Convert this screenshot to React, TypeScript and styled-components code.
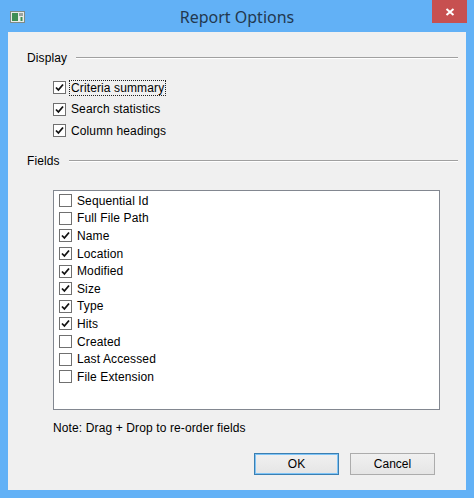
import React from "react";
import styled, { createGlobalStyle } from "styled-components";

const GlobalStyle = createGlobalStyle`
  html, body {
    margin: 0;
    padding: 0;
    background: #62b1f6;
  }
  * { box-sizing: border-box; }
`;

const Frame = styled.div`
  width: 474px;
  height: 498px;
  background: #62b1f6;
  display: flex;
  flex-direction: column;
  padding: 0 8px 8px 8px;
  font-family: "Liberation Sans", Arial, sans-serif;
  font-size: 12px;
  letter-spacing: 0.12px;
  color: #000;
`;

const TitleBar = styled.div`
  height: 32px;
  display: flex;
  align-items: center;
  position: relative;
  margin: 0 -8px;
`;

const AppIcon = styled.svg`
  position: absolute;
  left: 10px;
  top: 11px;
`;

const Title = styled.div`
  flex: 1;
  text-align: center;
  font-family: "Noto Sans", "Open Sans", sans-serif;
  font-size: 16px;
  letter-spacing: 0;
  color: #22384f;
  padding-top: 1px;
`;

const CloseButton = styled.div`
  position: absolute;
  right: 7px;
  top: 0;
  width: 35px;
  height: 23px;
  background: #c75050;
  display: flex;
  align-items: center;
  justify-content: center;
`;

const Client = styled.div`
  flex: 1;
  background: #f0f0f0;
  display: flex;
  flex-direction: column;
  padding: 18px 8px 15px 0;
`;

const GroupHeader = styled.div`
  height: 16px;
  display: flex;
  align-items: center;
  gap: 9px;
  padding-left: 19px;
`;

const GroupLine = styled.div`
  flex: 1;
  height: 2px;
  border-top: 1px solid #a0a0a0;
  border-bottom: 1px solid #ffffff;
`;

const OptionList = styled.div`
  display: flex;
  flex-direction: column;
  margin: 11px 0 11.5px 45px;
`;

const OptionRow = styled.label`
  height: 21.5px;
  display: flex;
  align-items: center;
  gap: 3px;
`;

const Label = styled.span<{ $focused?: boolean }>`
  padding: 0 1px;
  line-height: 14px;
  border: 1px dotted ${(p) => (p.$focused ? "#202020" : "transparent")};
`;

const Box = styled.span`
  width: 13px;
  height: 13px;
  border: 1px solid #707070;
  background: #ffffff;
  display: inline-flex;
  align-items: center;
  justify-content: center;
  flex: none;
`;

const ListBox = styled.div`
  margin: 21px 0 0 45px;
  width: 387px;
  height: 220px;
  background: #ffffff;
  border: 1px solid #828790;
  padding: 1px 5px;
  display: flex;
  flex-direction: column;
`;

const FieldRow = styled.div`
  height: 17.6px;
  display: flex;
  align-items: center;
  gap: 5px;
`;

const Note = styled.div`
  margin: 10px 0 0 45px;
  height: 16px;
  line-height: 16px;
`;

const ButtonRow = styled.div`
  margin-top: 17px;
  display: flex;
  justify-content: flex-end;
  gap: 11px;
  padding-right: 23px;
`;

const Button = styled.button<{ $default?: boolean }>`
  width: 85px;
  height: 22px;
  font-family: "Liberation Sans", Arial, sans-serif;
  font-size: 12px;
  color: #000;
  background: linear-gradient(#f0f0f0, #e5e5e5);
  border: 1px solid ${(p) => (p.$default ? "#3c7fb1" : "#acacac")};
  box-shadow: ${(p) => (p.$default ? "inset 0 0 0 1px #7ec4f7" : "none")};
  padding: 0;
`;

const Check = ({ on }: { on: boolean }) => (
  <Box>
    {on && (
      <svg width="9" height="9" viewBox="0 0 9 9">
        <path d="M1 4.5 L3.4 7 L8 1.5" fill="none" stroke="#111" strokeWidth="1.8" />
      </svg>
    )}
  </Box>
);

const display = [
  { label: "Criteria summary", on: true, focused: true },
  { label: "Search statistics", on: true },
  { label: "Column headings", on: true },
];

const fields = [
  { label: "Sequential Id", on: false },
  { label: "Full File Path", on: false },
  { label: "Name", on: true },
  { label: "Location", on: true },
  { label: "Modified", on: true },
  { label: "Size", on: true },
  { label: "Type", on: true },
  { label: "Hits", on: true },
  { label: "Created", on: false },
  { label: "Last Accessed", on: false },
  { label: "File Extension", on: false },
];

const App = () => {
  return (
    <>
      <GlobalStyle />
      <Frame>
        <TitleBar>
          <AppIcon width="15" height="12" viewBox="0 0 15 12">
            <rect x="0.5" y="0.5" width="14" height="11" fill="#e8ece8" stroke="#7f8a84" />
            <rect x="2" y="2" width="6" height="8" fill="#3f8f55" />
            <rect x="9" y="2" width="4" height="3" fill="#9aa4a0" />
            <rect x="10.5" y="6" width="2" height="4" fill="#3f8f55" />
          </AppIcon>
          <Title>Report Options</Title>
          <CloseButton>
            <svg width="10" height="8" viewBox="0 0 10 8">
              <path d="M1.5 1 L8.5 7 M8.5 1 L1.5 7" stroke="#fff" strokeWidth="2" />
            </svg>
          </CloseButton>
        </TitleBar>
        <Client>
          <GroupHeader>
            Display
            <GroupLine />
          </GroupHeader>
          <OptionList>
            {display.map((d) => (
              <OptionRow key={d.label}>
                <Check on={d.on} />
                <Label $focused={d.focused}>{d.label}</Label>
              </OptionRow>
            ))}
          </OptionList>
          <GroupHeader>
            Fields
            <GroupLine />
          </GroupHeader>
          <ListBox>
            {fields.map((f) => (
              <FieldRow key={f.label}>
                <Check on={f.on} />
                {f.label}
              </FieldRow>
            ))}
          </ListBox>
          <Note>Note: Drag + Drop to re-order fields</Note>
          <ButtonRow>
            <Button $default>OK</Button>
            <Button>Cancel</Button>
          </ButtonRow>
        </Client>
      </Frame>
    </>
  );
};

export default App;
